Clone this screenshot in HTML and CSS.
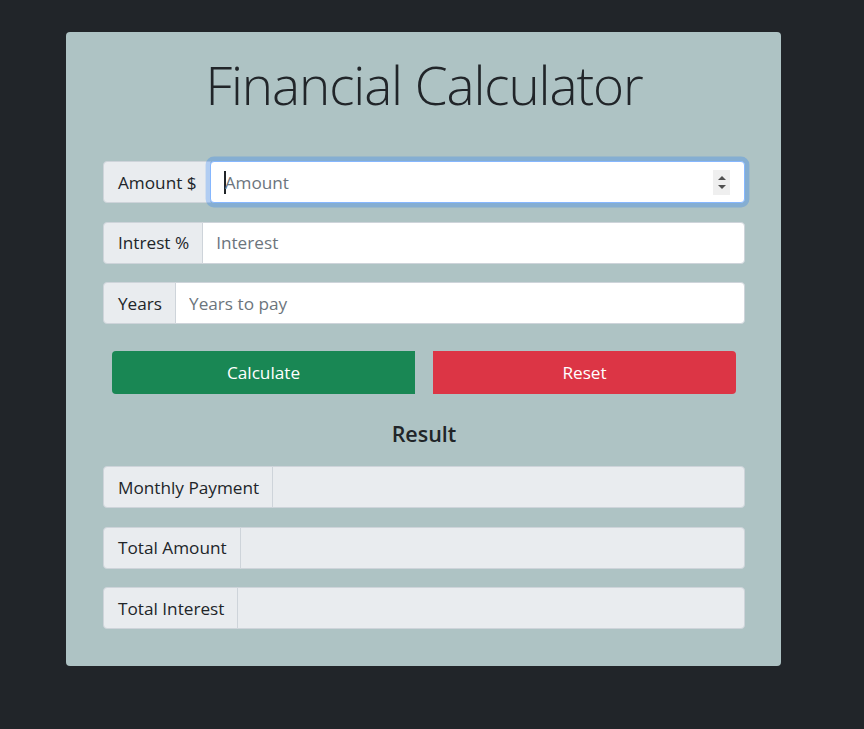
FILE: index.html
```html
<!DOCTYPE html>
<html lang="en">
<head>
<meta charset="utf-8">
<title>Financial Calculator</title>
<link rel="stylesheet" href="styles.css">
</head>
<body>
<div class="card">
  <h1 class="title">Financial Calculator</h1>
  <div class="stack">
    <div class="group">
      <span class="addon">Amount $</span>
      <div class="field focused">
        <span class="caret"></span>
        <input class="input" type="text" placeholder="Amount">
        <span class="spin"><span class="up"></span><span class="down"></span></span>
      </div>
    </div>
    <div class="group">
      <span class="addon">Intrest %</span>
      <div class="field"><input class="input" type="text" placeholder="Interest"></div>
    </div>
    <div class="group">
      <span class="addon">Years</span>
      <div class="field"><input class="input" type="text" placeholder="Years to pay"></div>
    </div>
  </div>
  <div class="actions">
    <button class="btn btn-green" type="button">Calculate</button>
    <button class="btn btn-red" type="button">Reset</button>
  </div>
  <h5 class="result">Result</h5>
  <div class="stack">
    <div class="group">
      <span class="addon">Monthly Payment</span>
      <div class="field disabled"></div>
    </div>
    <div class="group">
      <span class="addon">Total Amount</span>
      <div class="field disabled"></div>
    </div>
    <div class="group">
      <span class="addon">Total Interest</span>
      <div class="field disabled"></div>
    </div>
  </div>
</div>
</body>
</html>
```
FILE: styles.css
```css
* { box-sizing: border-box; }
html, body { margin: 0; }
body {
  background: #212529;
  font-family: "Open Sans", "Noto Sans", sans-serif;
  color: #212529;
  min-height: 729px;
  padding-top: 32px;
}
.card {
  margin-left: 66px;
  width: 715px;
  background: #aec3c4;
  border-radius: 4px;
  padding: 20px 36px 37px 37px;
}
.title {
  margin: 0 0 44px;
  font-size: 53px;
  font-weight: 300;
  letter-spacing: -1.1px;
  line-height: 65px;
  text-align: center;
}
.stack {
  display: flex;
  flex-direction: column;
  gap: 18.5px;
}
.group {
  display: flex;
  height: 42px;
}
.addon {
  display: flex;
  align-items: center;
  padding: 0 13px 0 14px;
  background: #e9ecef;
  border: 1px solid #ced4da;
  border-radius: 4px 0 0 4px;
  font-size: 17.2px;
  white-space: nowrap;
}
.field {
  flex: 1;
  display: flex;
  align-items: center;
  margin-left: -1px;
  background: #fff;
  border: 1px solid #ced4da;
  border-radius: 0 4px 4px 0;
  padding: 0 14px 0 13px;
}
.field.disabled { background: #e9ecef; }
.field.focused {
  z-index: 1;
  border-color: #86b7fe;
  box-shadow: 0 0 0 4.4px rgba(13, 110, 253, .25);
  border-radius: 4px;
}
.input {
  flex: 1;
  min-width: 0;
  border: 0;
  outline: 0;
  padding: 0;
  background: transparent;
  font-family: inherit;
  font-size: 17.2px;
  color: #212529;
}
.input::placeholder { color: #6c757d; }
.caret {
  width: 2px;
  height: 23px;
  background: #212529;
  margin-right: -1px;
  flex: none;
}
.spin {
  width: 17px;
  height: 25px;
  background: #efefef;
  display: flex;
  flex-direction: column;
  align-items: center;
  justify-content: center;
  gap: 5px;
  flex: none;
}
.up, .down {
  width: 0;
  height: 0;
  border-left: 4px solid transparent;
  border-right: 4px solid transparent;
}
.up { border-bottom: 4px solid #505050; }
.down { border-top: 4px solid #505050; }
.actions {
  display: flex;
  gap: 18px;
  padding: 0 9px;
  margin-top: 27px;
}
.btn {
  flex: 1;
  height: 43px;
  border: 0;
  color: #fff;
  font-family: inherit;
  font-size: 17.2px;
  cursor: pointer;
}
.btn-green { background: #198754; border-radius: 4px 0 0 4px; }
.btn-red { background: #dc3545; border-radius: 0 4px 4px 0; }
.result {
  margin: 27px 0 19px;
  font-size: 21.5px;
  font-weight: 600;
  line-height: 26.4px;
  text-align: center;
}
```
